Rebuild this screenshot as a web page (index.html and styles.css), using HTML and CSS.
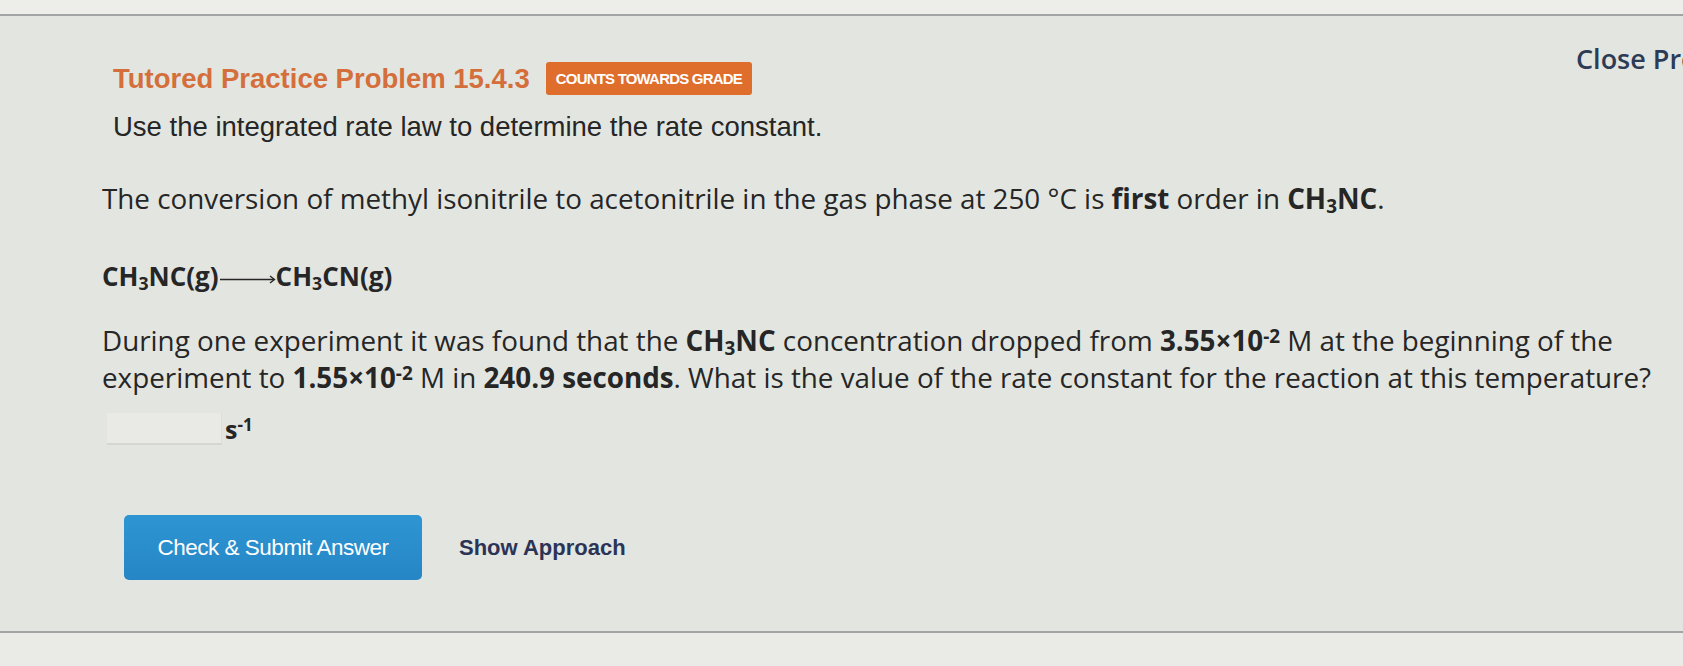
FILE: index.html
```html
<!DOCTYPE html>
<html>
<head>
<meta charset="utf-8">
<link rel="stylesheet" href="styles.css">
</head>
<body>
<div class="topband"></div>
<main class="panel">
  <div class="header">
    <div class="title-wrap">
      <h1 class="title">Tutored Practice Problem 15.4.3</h1>
      <span class="badge">COUNTS TOWARDS GRADE</span>
    </div>
    <a class="close">Close Problem</a>
  </div>
  <p class="intro">Use the integrated rate law to determine the rate constant.</p>
  <div class="problem">
    <p class="para">The conversion of methyl isonitrile to acetonitrile in the gas phase at 250 °C is <b>first</b> order in <b>CH<sub>3</sub>NC</b>.</p>
    <p class="eq">CH<sub>3</sub>NC(g)<svg class="arrow" width="56" height="12" viewBox="0 0 56 12"><path d="M0 6.5 H54" stroke="#262626" stroke-width="1.6" fill="none"/><path d="M50 3 L54.5 6.5 L50 10" stroke="#262626" stroke-width="1.4" fill="none"/></svg>CH<sub>3</sub>CN(g)</p>
    <p class="para during">During one experiment it was found that the <b>CH<sub>3</sub>NC</b> concentration dropped from <b>3.55×10<sup>-2</sup></b> M at the beginning of the experiment to <b>1.55×10<sup>-2</sup></b> M in <b>240.9 seconds</b>. What is the value of the rate constant for the reaction at this temperature?</p>
    <div class="answer">
      <span class="input"></span>
      <span class="unit">s<sup>-1</sup></span>
    </div>
  </div>
  <div class="actions">
    <button class="submit">Check &amp; Submit Answer</button>
    <a class="approach">Show Approach</a>
  </div>
</main>
<div class="bottomband"></div>
</body>
</html>
```
FILE: styles.css
```css
html, body {
  margin: 0;
  padding: 0;
  overflow: hidden;
  height: 666px;
  background: #ebebe7;
}
.topband {
  height: 14px;
  background: #ededea;
}
.panel {
  display: flex;
  flex-direction: column;
  height: 619px;
  box-sizing: border-box;
  background: #e3e5e1;
  border-top: 2px solid #a2a4a4;
  border-bottom: 2px solid #a3a5a5;
  padding: 0 0 0 102px;
}
.header {
  display: flex;
  align-items: flex-start;
}
.title-wrap {
  display: flex;
  align-items: center;
  margin-top: 46px;
  margin-left: 11px;
}
.title {
  margin: 0;
  font-family: "Liberation Sans", Arial, sans-serif;
  font-weight: bold;
  font-size: 27.5px;
  line-height: 33px;
  color: #d46f3c;
}
.badge {
  margin-left: 16px;
  padding: 0 10px;
  line-height: 33px;
  height: 33px;
  background: #df6d2c;
  color: #fff;
  font-family: "Liberation Sans", Arial, sans-serif;
  font-weight: bold;
  font-size: 15px;
  letter-spacing: -0.8px;
  border-radius: 3px;
}
.close {
  margin-left: auto;
  margin-top: 24px;
  width: 107px;
  overflow: hidden;
  white-space: nowrap;
  font-family: "Open Sans", sans-serif;
  font-weight: 600;
  font-size: 27px;
  color: #2d3b55;
}
.intro {
  margin: 15px 0 0 11px;
  font-family: "Liberation Sans", Arial, sans-serif;
  font-size: 27.5px;
  line-height: 34px;
  color: #262626;
}
.problem {
  font-family: "Open Sans", sans-serif;
  font-size: 27.8px;
  color: #262626;
}
.problem b { font-weight: bold; }
sub { font-size: 0.68em; vertical-align: -0.2em; line-height: 1; }
sup { font-size: 0.68em; vertical-align: 0.45em; line-height: 1; }
.para {
  margin: 36px 0 0;
  line-height: 37px;
}
.eq {
  margin: 41px 0 0;
  font-weight: bold;
  font-size: 26px;
  line-height: 37px;
}
.arrow {
  margin: 0 0 0 1px;
  vertical-align: middle;
}
.during {
  margin-top: 27px;
  max-width: 1560px;
}
.answer {
  display: flex;
  align-items: center;
  margin: 17px 0 0 5px;
}
.input {
  width: 114px;
  height: 30px;
  background: #e9eae6;
  border-bottom: 2px solid #d4d6d2;
  border-right: 1px solid #dcded9;
}
.unit {
  margin-left: 3px;
  font-weight: bold;
  font-size: 25px;
  line-height: 32px;
}
.actions {
  display: flex;
  align-items: center;
  margin: 70px 0 0 22px;
}
.submit {
  width: 298px;
  height: 65px;
  border: none;
  border-radius: 5px;
  background: linear-gradient(#2e95d3, #2686c5);
  color: #fff;
  font-family: "Liberation Sans", Arial, sans-serif;
  font-size: 22.5px;
  letter-spacing: -0.5px;
}
.approach {
  margin-left: 37px;
  font-family: "Liberation Sans", Arial, sans-serif;
  font-weight: bold;
  font-size: 22px;
  color: #2c3456;
}
.bottomband {
  height: 33px;
  background: #eaeae6;
}
```
